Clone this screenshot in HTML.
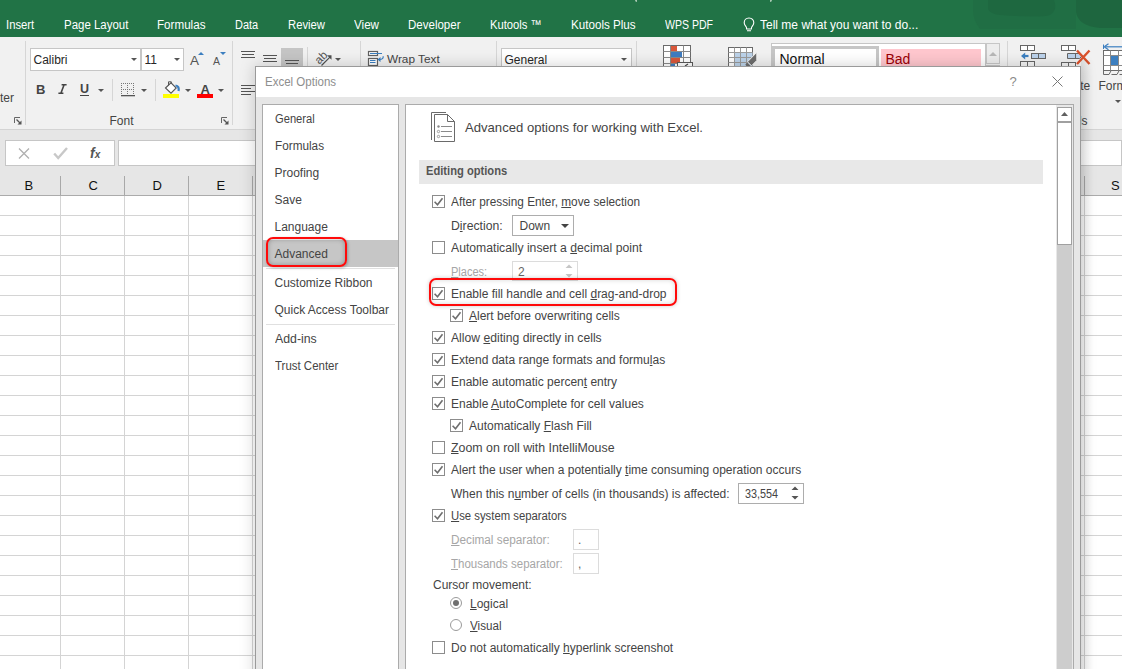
<!DOCTYPE html>
<html><head><meta charset="utf-8">
<style>
html,body{margin:0;padding:0;width:1122px;height:669px;overflow:hidden;background:#fff;position:relative}
.t{position:absolute;white-space:nowrap;font-family:"Liberation Sans",sans-serif}
.t u{text-decoration:underline;text-underline-offset:1px}
.r{position:absolute;display:block}
</style></head><body>
<div class="r" style="left:0px;top:0px;width:1122px;height:37px;background:#217346"></div>
<svg class="r" style="left:960px;top:0px;" width="162" height="37" viewBox="0 0 162 37"><path d="M13 0 L116 0 L116 29 L20 29 Q13 20 13 10 Z" fill="#206e44"/><path d="M28 0 L94 0 Q98 10 90 15 Q80 18 40 15 Q30 14 28 9 Z" fill="#1e6840"/><path d="M116 0 L162 0 L162 28 L140 28 Q118 26 116 12 Z" fill="#1e663f"/></svg>
<div class="r" style="left:635px;top:0px;width:2px;height:2px;background:#a8c9b4;border-radius:0 0 0 2px"></div>
<div class="r" style="left:770px;top:0px;width:2px;height:2px;background:#a8c9b4;border-radius:0 0 2px 0"></div>
<div class="t" style="left:5.5px;top:19.42px;font-size:12.5px;line-height:12.5px;color:#ffffff;font-weight:normal;transform:scaleX(0.902);transform-origin:0 0">Insert</div>
<div class="t" style="left:63.5px;top:19.42px;font-size:12.5px;line-height:12.5px;color:#ffffff;font-weight:normal;transform:scaleX(0.917);transform-origin:0 0">Page Layout</div>
<div class="t" style="left:157px;top:19.42px;font-size:12.5px;line-height:12.5px;color:#ffffff;font-weight:normal;transform:scaleX(0.931);transform-origin:0 0">Formulas</div>
<div class="t" style="left:235px;top:19.42px;font-size:12.5px;line-height:12.5px;color:#ffffff;font-weight:normal;transform:scaleX(0.877);transform-origin:0 0">Data</div>
<div class="t" style="left:288px;top:19.42px;font-size:12.5px;line-height:12.5px;color:#ffffff;font-weight:normal;transform:scaleX(0.902);transform-origin:0 0">Review</div>
<div class="t" style="left:353.5px;top:19.42px;font-size:12.5px;line-height:12.5px;color:#ffffff;font-weight:normal;transform:scaleX(0.930);transform-origin:0 0">View</div>
<div class="t" style="left:408px;top:19.42px;font-size:12.5px;line-height:12.5px;color:#ffffff;font-weight:normal;transform:scaleX(0.921);transform-origin:0 0">Developer</div>
<div class="t" style="left:490px;top:19.42px;font-size:12.5px;line-height:12.5px;color:#ffffff;font-weight:normal;transform:scaleX(0.898);transform-origin:0 0">Kutools ™</div>
<div class="t" style="left:571px;top:19.42px;font-size:12.5px;line-height:12.5px;color:#ffffff;font-weight:normal;transform:scaleX(0.930);transform-origin:0 0">Kutools Plus</div>
<div class="t" style="left:664.5px;top:19.42px;font-size:12.5px;line-height:12.5px;color:#ffffff;font-weight:normal;transform:scaleX(0.844);transform-origin:0 0">WPS PDF</div>
<div class="t" style="left:759.5px;top:19.42px;font-size:12.5px;line-height:12.5px;color:#ffffff;font-weight:normal;transform:scaleX(0.961);transform-origin:0 0">Tell me what you want to do...</div>
<svg class="r" style="left:743px;top:17px;" width="12" height="15" viewBox="0 0 12 15"><path d="M6 1 C3 1 1.2 3.2 1.2 5.7 C1.2 7.8 2.6 8.9 3.4 10.3 L3.6 12 L8.4 12 L8.6 10.3 C9.4 8.9 10.8 7.8 10.8 5.7 C10.8 3.2 9 1 6 1 Z M4 13.8 L8 13.8" fill="none" stroke="#fff" stroke-width="1.1"/></svg>
<div class="r" style="left:0px;top:37px;width:1122px;height:92px;background:#f1f1f1"></div>
<div class="r" style="left:0px;top:129px;width:1122px;height:1px;background:#d4d4d4"></div>
<div class="r" style="left:25px;top:41px;width:1px;height:84px;background:#d6d6d6"></div>
<div class="r" style="left:232px;top:41px;width:1px;height:84px;background:#d6d6d6"></div>
<div class="r" style="left:496px;top:41px;width:1px;height:84px;background:#d6d6d6"></div>
<div class="r" style="left:636px;top:41px;width:1px;height:84px;background:#d6d6d6"></div>
<div class="r" style="left:1007px;top:41px;width:1px;height:84px;background:#d6d6d6"></div>
<div class="r" style="left:307px;top:47px;width:1px;height:20px;background:#d6d6d6"></div>
<div class="r" style="left:112px;top:79px;width:1px;height:22px;background:#d6d6d6"></div>
<div class="r" style="left:155px;top:79px;width:1px;height:22px;background:#d6d6d6"></div>
<div class="t" style="left:0px;top:91.84px;font-size:12px;line-height:12px;color:#444;font-weight:normal;">ter</div>
<svg class="r" style="left:14px;top:117px;" width="8" height="8" viewBox="0 0 8 8"><path d="M0.5 6 L0.5 0.5 L6 0.5" fill="none" stroke="#666" stroke-width="1"/><path d="M2.5 2.5 L6.5 6.5" stroke="#555" stroke-width="1.2"/><path d="M3.5 7.5 H7.5 V3.5 Z" fill="#555"/></svg>
<svg class="r" style="left:221px;top:117px;" width="8" height="8" viewBox="0 0 8 8"><path d="M0.5 6 L0.5 0.5 L6 0.5" fill="none" stroke="#666" stroke-width="1"/><path d="M2.5 2.5 L6.5 6.5" stroke="#555" stroke-width="1.2"/><path d="M3.5 7.5 H7.5 V3.5 Z" fill="#555"/></svg>
<div class="t" style="left:109.5px;top:114.84px;font-size:12px;line-height:12px;color:#444;font-weight:normal;">Font</div>
<div class="r" style="left:30px;top:48px;width:111px;height:23px;background:#fff;border:1px solid #c6c6c6;box-sizing:border-box"></div>
<div class="r" style="left:141px;top:48px;width:43px;height:23px;background:#fff;border:1px solid #c6c6c6;box-sizing:border-box"></div>
<div class="t" style="left:33.5px;top:53.84px;font-size:12px;line-height:12px;color:#262626;font-weight:normal;">Calibri</div>
<div class="t" style="left:144.5px;top:53.84px;font-size:12px;line-height:12px;color:#262626;font-weight:normal;">11</div>
<svg class="r" style="left:131px;top:58px;" width="6" height="3" viewBox="0 0 6 3"><path d="M0 0 L6 0 L3.0 3 Z" fill="#555"/></svg>
<svg class="r" style="left:174px;top:58px;" width="6" height="3" viewBox="0 0 6 3"><path d="M0 0 L6 0 L3.0 3 Z" fill="#555"/></svg>
<div class="t" style="left:190px;top:53.57px;font-size:13.5px;line-height:13.5px;color:#555;font-weight:normal;">A</div>
<svg class="r" style="left:198px;top:52px;" width="6" height="3" viewBox="0 0 6 3"><path d="M0 3 L6 3 L3 0 Z" fill="#3c7fc0"/></svg>
<div class="t" style="left:213px;top:56.11px;font-size:10.5px;line-height:10.5px;color:#555;font-weight:normal;">A</div>
<svg class="r" style="left:219.5px;top:52px;" width="6" height="3" viewBox="0 0 6 3"><path d="M0 0 L6 0 L3 3 Z" fill="#3c7fc0"/></svg>
<div class="t" style="left:36px;top:83.00px;font-size:13px;line-height:13px;color:#444;font-weight:bold;">B</div>
<svg class="r" style="left:58px;top:84px;" width="9" height="10" viewBox="0 0 9 10"><path d="M3.6 0.8 H8.6 M0.4 9.2 H5.4 M6.1 0.8 L2.9 9.2" fill="none" stroke="#444" stroke-width="1.6"/></svg>
<div class="t" style="left:80px;top:83.42px;font-size:12.5px;line-height:12.5px;color:#444;font-weight:bold;">U</div>
<div class="r" style="left:80px;top:95px;width:9px;height:1px;background:#444"></div>
<svg class="r" style="left:98px;top:89px;" width="6" height="3" viewBox="0 0 6 3"><path d="M0 0 L6 0 L3.0 3 Z" fill="#555"/></svg>
<svg class="r" style="left:121px;top:83px;" width="14" height="14" viewBox="0 0 14 14"><rect x="0" y="0" width="1" height="1" fill="#777"/><rect x="0" y="0" width="1" height="1" fill="#777"/><rect x="0" y="6" width="1" height="1" fill="#777"/><rect x="6" y="0" width="1" height="1" fill="#777"/><rect x="0" y="12" width="1" height="1" fill="#777"/><rect x="12" y="0" width="1" height="1" fill="#777"/><rect x="2" y="0" width="1" height="1" fill="#777"/><rect x="0" y="2" width="1" height="1" fill="#777"/><rect x="2" y="6" width="1" height="1" fill="#777"/><rect x="6" y="2" width="1" height="1" fill="#777"/><rect x="2" y="12" width="1" height="1" fill="#777"/><rect x="12" y="2" width="1" height="1" fill="#777"/><rect x="4" y="0" width="1" height="1" fill="#777"/><rect x="0" y="4" width="1" height="1" fill="#777"/><rect x="4" y="6" width="1" height="1" fill="#777"/><rect x="6" y="4" width="1" height="1" fill="#777"/><rect x="4" y="12" width="1" height="1" fill="#777"/><rect x="12" y="4" width="1" height="1" fill="#777"/><rect x="6" y="0" width="1" height="1" fill="#777"/><rect x="0" y="6" width="1" height="1" fill="#777"/><rect x="6" y="6" width="1" height="1" fill="#777"/><rect x="6" y="6" width="1" height="1" fill="#777"/><rect x="6" y="12" width="1" height="1" fill="#777"/><rect x="12" y="6" width="1" height="1" fill="#777"/><rect x="8" y="0" width="1" height="1" fill="#777"/><rect x="0" y="8" width="1" height="1" fill="#777"/><rect x="8" y="6" width="1" height="1" fill="#777"/><rect x="6" y="8" width="1" height="1" fill="#777"/><rect x="8" y="12" width="1" height="1" fill="#777"/><rect x="12" y="8" width="1" height="1" fill="#777"/><rect x="10" y="0" width="1" height="1" fill="#777"/><rect x="0" y="10" width="1" height="1" fill="#777"/><rect x="10" y="6" width="1" height="1" fill="#777"/><rect x="6" y="10" width="1" height="1" fill="#777"/><rect x="10" y="12" width="1" height="1" fill="#777"/><rect x="12" y="10" width="1" height="1" fill="#777"/><rect x="12" y="0" width="1" height="1" fill="#777"/><rect x="0" y="12" width="1" height="1" fill="#777"/><rect x="12" y="6" width="1" height="1" fill="#777"/><rect x="6" y="12" width="1" height="1" fill="#777"/><rect x="12" y="12" width="1" height="1" fill="#777"/><rect x="12" y="12" width="1" height="1" fill="#777"/><rect x="0" y="12" width="14" height="1.3" fill="#555"/></svg>
<svg class="r" style="left:141px;top:89px;" width="6" height="3" viewBox="0 0 6 3"><path d="M0 0 L6 0 L3.0 3 Z" fill="#555"/></svg>
<svg class="r" style="left:163px;top:81px;" width="17" height="13" viewBox="0 0 17 13"><path d="M2.5 7 L8 1.8 L13.2 7 L8 12.2 Z" fill="#fff" stroke="#555" stroke-width="1.1"/><path d="M5.5 4.6 V0.8 H8.3 V3" fill="none" stroke="#555" stroke-width="1"/><path d="M12.5 4.5 Q16.5 5 15.5 10" fill="none" stroke="#3c7fc0" stroke-width="2.2"/></svg>
<div class="r" style="left:163px;top:94px;width:16px;height:4px;background:#ffff00"></div>
<svg class="r" style="left:185px;top:89px;" width="6" height="3" viewBox="0 0 6 3"><path d="M0 0 L6 0 L3.0 3 Z" fill="#555"/></svg>
<div class="t" style="left:200.5px;top:83.00px;font-size:13px;line-height:13px;color:#444;font-weight:bold;">A</div>
<div class="r" style="left:197px;top:94px;width:16px;height:4px;background:#ff0000"></div>
<svg class="r" style="left:218px;top:89px;" width="6" height="3" viewBox="0 0 6 3"><path d="M0 0 L6 0 L3.0 3 Z" fill="#555"/></svg>
<div class="r" style="left:241px;top:51px;width:14px;height:1px;background:#555"></div>
<div class="r" style="left:242px;top:54px;width:12px;height:1px;background:#555"></div>
<div class="r" style="left:241px;top:57px;width:14px;height:1px;background:#555"></div>
<div class="r" style="left:263px;top:55px;width:14px;height:1px;background:#555"></div>
<div class="r" style="left:264px;top:58px;width:12px;height:1px;background:#555"></div>
<div class="r" style="left:263px;top:61px;width:14px;height:1px;background:#555"></div>
<div class="r" style="left:281px;top:48px;width:22px;height:19px;background:#c5c5c5"></div>
<div class="r" style="left:285px;top:60px;width:14px;height:1px;background:#555"></div>
<div class="r" style="left:286px;top:63px;width:12px;height:1px;background:#555"></div>
<div class="r" style="left:285px;top:66px;width:1px;height:1px;background:#555"></div>
<div class="r" style="left:241px;top:85px;width:14px;height:1px;background:#555"></div>
<div class="r" style="left:241px;top:88px;width:10px;height:1px;background:#555"></div>
<div class="r" style="left:241px;top:91px;width:14px;height:1px;background:#555"></div>
<div class="r" style="left:241px;top:94px;width:10px;height:1px;background:#555"></div>
<svg class="r" style="left:312px;top:46px;" width="24" height="22" viewBox="0 0 24 22"><text transform="translate(7.2,18.8) rotate(-45)" font-family="Liberation Sans" font-size="11.5" fill="#505050">ab</text><path d="M9.5 19.5 L18.2 10.8" stroke="#505050" stroke-width="1.2"/><path d="M15 9.2 L19.5 9.2 L19.5 13.7 Z" fill="#505050"/></svg>
<svg class="r" style="left:335px;top:58px;" width="6" height="3" viewBox="0 0 6 3"><path d="M0 0 L6 0 L3.0 3 Z" fill="#555"/></svg>
<div class="r" style="left:360px;top:41px;width:1px;height:30px;background:#d6d6d6"></div>
<svg class="r" style="left:367px;top:50px;" width="18" height="17" viewBox="0 0 18 17"><rect x="1.5" y="1.5" width="9" height="4" fill="#fff" stroke="#606060" stroke-width="1.2"/><rect x="1.5" y="8.5" width="9" height="7" fill="#fff" stroke="#606060" stroke-width="1.2"/><path d="M3 3.5 H15 M3 10.5 H8.5 M3 12.5 H8.5" stroke="#3c7fc0" stroke-width="1"/><path d="M16.2 6.2 Q16.5 9.5 12.5 9.5" fill="none" stroke="#3c7fc0" stroke-width="1.2"/><path d="M10.5 9.5 L13.5 7 L13.5 12 Z" fill="#3c7fc0"/></svg>
<div class="t" style="left:387px;top:54.01px;font-size:11.8px;line-height:11.8px;color:#444;font-weight:normal;">Wrap Text</div>
<div class="r" style="left:501px;top:48px;width:131px;height:30px;background:#fff;border:1px solid #c6c6c6;box-sizing:border-box"></div>
<div class="t" style="left:504.5px;top:53.84px;font-size:12px;line-height:12px;color:#262626;font-weight:normal;">General</div>
<svg class="r" style="left:621px;top:58px;" width="6" height="3" viewBox="0 0 6 3"><path d="M0 0 L6 0 L3.0 3 Z" fill="#555"/></svg>
<svg class="r" style="left:662px;top:44px;" width="32" height="24" viewBox="0 0 32 24"><rect x="1.5" y="1.5" width="27" height="24" fill="#fff" stroke="#6a6a6a"/><path d="M1.5 7.5 H28.5 M1.5 13.5 H28.5 M1.5 19.5 H28.5 M8.5 1.5 V24 M21.5 1.5 V24" stroke="#8a8a8a"/><rect x="9" y="2" width="6" height="5" fill="#d9573a"/><rect x="9" y="8" width="11" height="5" fill="#3f7cc0"/><rect x="9" y="14" width="9" height="5" fill="#d9573a"/><rect x="9" y="20" width="4" height="4" fill="#3f7cc0"/><rect x="15.5" y="18.5" width="15" height="8" fill="#fff" stroke="#5a5a5a"/><path d="M23 22 L26 20" stroke="#444" stroke-width="1.2"/></svg>
<svg class="r" style="left:727px;top:46px;" width="32" height="22" viewBox="0 0 32 22"><rect x="1.5" y="1.5" width="24" height="21" fill="#fff" stroke="#6a6a6a"/><rect x="7.5" y="6.5" width="18" height="16" fill="#bcd3ea"/><path d="M7.5 1.5 V22 M13.5 1.5 V22 M19.5 1.5 V22 M1.5 6.5 H25.5 M1.5 11.5 H25.5 M1.5 16.5 H25.5" stroke="#9a9a9a"/><path d="M29.8 6.3 L29.8 14.5 L24.5 19.8 L20.5 15.8 Z" fill="#6e6e6e" stroke="#f4f4f4" stroke-width="1"/><path d="M20.3 16.6 L23.7 20 L21.4 22 L18.3 18.8 Z" fill="#6e6e6e"/><path d="M16.5 22 L19 20.5" stroke="#3c6fa8" stroke-width="1.4"/></svg>
<div class="r" style="left:771px;top:43px;width:215px;height:30px;background:#fff;border-top:1px solid #c6c6c6;border-left:1px solid #c6c6c6;box-sizing:border-box"></div>
<div class="r" style="left:772px;top:46px;width:107px;height:27px;background:#fff;border:3px solid #c6c6c6;box-sizing:border-box;border-bottom:none"></div>
<div class="t" style="left:779.5px;top:52.15px;font-size:14px;line-height:14px;color:#111;font-weight:normal;">Normal</div>
<div class="r" style="left:881px;top:49px;width:100px;height:24px;background:#ffc7ce"></div>
<div class="t" style="left:885.5px;top:52.15px;font-size:14px;line-height:14px;color:#9c0006;font-weight:normal;">Bad</div>
<div class="r" style="left:985px;top:43px;width:1px;height:30px;background:#c6c6c6"></div>
<div class="r" style="left:986px;top:43px;width:14px;height:21px;background:#ededed;border:1px solid #c6c6c6;box-sizing:border-box"></div>
<svg class="r" style="left:989px;top:52px;" width="8" height="4" viewBox="0 0 8 4"><path d="M0 4 L8 4 L4 0 Z" fill="#b8b8b8"/></svg>
<div class="r" style="left:986px;top:65px;width:14px;height:8px;background:#ededed;border:1px solid #c6c6c6;box-sizing:border-box"></div>
<svg class="r" style="left:1019px;top:44px;" width="28" height="24" viewBox="0 0 28 24"><rect x="1.5" y="1.5" width="14" height="5" fill="#fff" stroke="#666"/><path d="M8.5 1.5 V6.5" stroke="#666"/><rect x="1.5" y="17.5" width="14" height="5" fill="#f4f4f4" stroke="#666"/><path d="M8.5 17.5 V22.5" stroke="#666"/><rect x="12.5" y="9.5" width="14" height="5" fill="#bcd3ec" stroke="#666"/><path d="M19.5 9.5 V14.5" stroke="#666"/><path d="M9.5 12 H5" stroke="#3c7fc0" stroke-width="2.2"/><path d="M2 12 L6.2 8.6 L6.2 15.4 Z" fill="#3c7fc0"/></svg>
<svg class="r" style="left:1060px;top:44px;" width="32" height="24" viewBox="0 0 32 24"><rect x="1.5" y="1.5" width="14" height="5" fill="#fff" stroke="#666"/><path d="M8.5 1.5 V6.5" stroke="#666"/><rect x="1.5" y="18.5" width="14" height="5" fill="#f4f4f4" stroke="#666"/><path d="M8.5 18.5 V23.5" stroke="#666"/><path d="M7.5 9.5 H19.5 L22 12 L19.5 14.5 H7.5 Z" fill="#bcd3ec" stroke="#666"/><path d="M15.5 9.5 V14.5" stroke="#666"/><path d="M17 6.5 L29.5 20 M29.5 6.5 L17 20" stroke="#d9512c" stroke-width="2.4"/></svg>
<svg class="r" style="left:1102px;top:43px;" width="20" height="33" viewBox="0 0 20 33"><path d="M1.5 1.5 V6" stroke="#3c7fc0" stroke-width="1"/><path d="M3 3.8 H20" stroke="#3c7fc0" stroke-width="1.2"/><path d="M2.2 3.8 L6.5 0.8 M2.2 3.8 L6.5 6.8" stroke="#3c7fc0" stroke-width="1.2" fill="none"/><rect x="1.5" y="7.5" width="22" height="20" fill="#fff" stroke="#6a6a6a"/><path d="M1.5 12.5 H22 M1.5 22.5 H22 M8.5 7.5 V27.5 M16.5 7.5 V27.5" stroke="#8a8a8a"/><rect x="9" y="13" width="7" height="9" fill="#3c7fc0"/><path d="M1.5 27.5 V31.5 H7 L9 27.8 M9.5 31.5 H15 L17 27.8 M17.5 31.5 H20" fill="none" stroke="#6a6a6a"/></svg>
<div class="t" style="left:1074px;top:79.84px;font-size:12px;line-height:12px;color:#444;font-weight:normal;letter-spacing:-0.3px">ete</div>
<div class="t" style="left:1098.5px;top:79.84px;font-size:12px;line-height:12px;color:#444;font-weight:normal;">Format</div>
<svg class="r" style="left:1115px;top:100px;" width="6" height="3" viewBox="0 0 6 3"><path d="M0 0 L6 0 L3.0 3 Z" fill="#555"/></svg>
<div class="t" style="left:1079px;top:114.84px;font-size:12px;line-height:12px;color:#444;font-weight:normal;">l</div>
<div class="t" style="left:1081.5px;top:114.84px;font-size:12px;line-height:12px;color:#444;font-weight:normal;">s</div>
<div class="r" style="left:0px;top:130px;width:1122px;height:46px;background:#e6e6e6"></div>
<div class="r" style="left:5px;top:140px;width:110px;height:26px;background:#fff;border:1px solid #c6c6c6;box-sizing:border-box"></div>
<div class="r" style="left:118px;top:140px;width:1004px;height:26px;background:#fff;border:1px solid #c6c6c6;box-sizing:border-box"></div>
<svg class="r" style="left:18px;top:148px;" width="12" height="11" viewBox="0 0 12 11"><path d="M1 0.5 L11 10.5 M11 0.5 L1 10.5" stroke="#b0b0b0" stroke-width="1.3"/></svg>
<svg class="r" style="left:53px;top:147px;" width="15" height="13" viewBox="0 0 15 13"><path d="M1.2 6.5 L5.2 11 L14 1" fill="none" stroke="#c8c8c8" stroke-width="2.4"/></svg>
<div class="t" style="left:90px;top:146.15px;font-size:14px;line-height:14px;color:#555;font-weight:normal;font-family:"Liberation Serif",serif"><b><i>f</i></b><span style="font-size:10px;font-weight:bold;font-style:italic">x</span></div>
<div class="r" style="left:0px;top:176px;width:1122px;height:19px;background:#e6e6e6"></div>
<div class="r" style="left:0px;top:195px;width:1122px;height:1px;background:#ababab"></div>
<div class="r" style="left:60px;top:176px;width:1px;height:19px;background:#a8a8a8"></div>
<div class="r" style="left:124px;top:176px;width:1px;height:19px;background:#a8a8a8"></div>
<div class="r" style="left:188px;top:176px;width:1px;height:19px;background:#a8a8a8"></div>
<div class="r" style="left:252px;top:176px;width:1px;height:19px;background:#a8a8a8"></div>
<div class="r" style="left:1084px;top:176px;width:1px;height:19px;background:#a8a8a8"></div>
<div class="t" style="left:24.5px;top:179.00px;font-size:13px;line-height:13px;color:#111;font-weight:normal;">B</div>
<div class="t" style="left:88.5px;top:179.00px;font-size:13px;line-height:13px;color:#111;font-weight:normal;">C</div>
<div class="t" style="left:152.5px;top:179.00px;font-size:13px;line-height:13px;color:#111;font-weight:normal;">D</div>
<div class="t" style="left:216.5px;top:179.00px;font-size:13px;line-height:13px;color:#111;font-weight:normal;">E</div>
<div class="t" style="left:1111px;top:179.00px;font-size:13px;line-height:13px;color:#111;font-weight:normal;">S</div>
<div class="r" style="left:0px;top:196px;width:1122px;height:473px;background:#fff"></div>
<div class="r" style="left:0px;top:215px;width:1122px;height:1px;background:#d4d4d4"></div>
<div class="r" style="left:0px;top:235px;width:1122px;height:1px;background:#d4d4d4"></div>
<div class="r" style="left:0px;top:255px;width:1122px;height:1px;background:#d4d4d4"></div>
<div class="r" style="left:0px;top:275px;width:1122px;height:1px;background:#d4d4d4"></div>
<div class="r" style="left:0px;top:295px;width:1122px;height:1px;background:#d4d4d4"></div>
<div class="r" style="left:0px;top:315px;width:1122px;height:1px;background:#d4d4d4"></div>
<div class="r" style="left:0px;top:335px;width:1122px;height:1px;background:#d4d4d4"></div>
<div class="r" style="left:0px;top:355px;width:1122px;height:1px;background:#d4d4d4"></div>
<div class="r" style="left:0px;top:375px;width:1122px;height:1px;background:#d4d4d4"></div>
<div class="r" style="left:0px;top:395px;width:1122px;height:1px;background:#d4d4d4"></div>
<div class="r" style="left:0px;top:415px;width:1122px;height:1px;background:#d4d4d4"></div>
<div class="r" style="left:0px;top:435px;width:1122px;height:1px;background:#d4d4d4"></div>
<div class="r" style="left:0px;top:455px;width:1122px;height:1px;background:#d4d4d4"></div>
<div class="r" style="left:0px;top:475px;width:1122px;height:1px;background:#d4d4d4"></div>
<div class="r" style="left:0px;top:495px;width:1122px;height:1px;background:#d4d4d4"></div>
<div class="r" style="left:0px;top:515px;width:1122px;height:1px;background:#d4d4d4"></div>
<div class="r" style="left:0px;top:535px;width:1122px;height:1px;background:#d4d4d4"></div>
<div class="r" style="left:0px;top:555px;width:1122px;height:1px;background:#d4d4d4"></div>
<div class="r" style="left:0px;top:575px;width:1122px;height:1px;background:#d4d4d4"></div>
<div class="r" style="left:0px;top:595px;width:1122px;height:1px;background:#d4d4d4"></div>
<div class="r" style="left:0px;top:615px;width:1122px;height:1px;background:#d4d4d4"></div>
<div class="r" style="left:0px;top:635px;width:1122px;height:1px;background:#d4d4d4"></div>
<div class="r" style="left:0px;top:655px;width:1122px;height:1px;background:#d4d4d4"></div>
<div class="r" style="left:60px;top:196px;width:1px;height:473px;background:#d4d4d4"></div>
<div class="r" style="left:124px;top:196px;width:1px;height:473px;background:#d4d4d4"></div>
<div class="r" style="left:188px;top:196px;width:1px;height:473px;background:#d4d4d4"></div>
<div class="r" style="left:252px;top:196px;width:1px;height:473px;background:#d4d4d4"></div>
<div class="r" style="left:1084px;top:196px;width:1px;height:473px;background:#d4d4d4"></div>
<div class="r" style="left:255px;top:66px;width:826px;height:620px;box-shadow:0 0 14px 1px rgba(0,0,0,0.17)"></div>
<div class="r" style="left:1081px;top:60px;width:12px;height:609px;background:linear-gradient(to right, rgba(0,0,0,0.07), rgba(0,0,0,0))"></div>
<div class="r" style="left:255px;top:66px;width:826px;height:603px;background:#e6e6e6;border:1px solid #9a9a9a;box-sizing:border-box;border-bottom:none"></div>
<div class="r" style="left:256px;top:67px;width:824px;height:30px;background:#fff"></div>
<div class="t" style="left:264.5px;top:75.84px;font-size:12px;line-height:12px;color:#8e8e8e;font-weight:normal;transform:scaleX(0.96);transform-origin:0 0">Excel Options</div>
<div class="t" style="left:1009.5px;top:75.00px;font-size:13px;line-height:13px;color:#8a8a8a;font-weight:normal;">?</div>
<svg class="r" style="left:1052px;top:76px;" width="11" height="11" viewBox="0 0 11 11"><path d="M0.5 0.5 L10.5 10.5 M10.5 0.5 L0.5 10.5" stroke="#777" stroke-width="1"/></svg>
<div class="r" style="left:262px;top:104px;width:137px;height:565px;background:#fff;border:1px solid #ababab;box-sizing:border-box;border-bottom:none"></div>
<div class="r" style="left:263px;top:240px;width:135px;height:27px;background:#c6c6c6"></div>
<div class="r" style="left:266px;top:268px;width:129px;height:1px;background:#e0e0e0"></div>
<div class="r" style="left:266px;top:324px;width:129px;height:1px;background:#e0e0e0"></div>
<div class="t" style="left:274.5px;top:112.84px;font-size:12px;line-height:12px;color:#444;font-weight:normal;transform:scaleX(0.93);transform-origin:0 0">General</div>
<div class="t" style="left:274.5px;top:139.84px;font-size:12px;line-height:12px;color:#444;font-weight:normal;transform:scaleX(0.98);transform-origin:0 0">Formulas</div>
<div class="t" style="left:274.5px;top:166.84px;font-size:12px;line-height:12px;color:#444;font-weight:normal;">Proofing</div>
<div class="t" style="left:274.5px;top:193.84px;font-size:12px;line-height:12px;color:#444;font-weight:normal;">Save</div>
<div class="t" style="left:274.5px;top:220.84px;font-size:12px;line-height:12px;color:#444;font-weight:normal;">Language</div>
<div class="t" style="left:274.5px;top:247.84px;font-size:12px;line-height:12px;color:#444;font-weight:normal;">Advanced</div>
<div class="t" style="left:274.5px;top:276.84px;font-size:12px;line-height:12px;color:#444;font-weight:normal;">Customize Ribbon</div>
<div class="t" style="left:274.5px;top:303.84px;font-size:12px;line-height:12px;color:#444;font-weight:normal;">Quick Access Toolbar</div>
<div class="t" style="left:274.5px;top:332.84px;font-size:12px;line-height:12px;color:#444;font-weight:normal;transform:scaleX(1.025);transform-origin:0 0">Add-ins</div>
<div class="t" style="left:274.5px;top:359.84px;font-size:12px;line-height:12px;color:#444;font-weight:normal;transform:scaleX(0.955);transform-origin:0 0">Trust Center</div>
<div class="r" style="left:265.5px;top:236.5px;width:81px;height:30px;border:2.5px solid #ff0a0a;border-radius:7px;box-sizing:border-box;box-shadow:inset 0 0 5px rgba(0,0,0,0.28), 1px 1px 3px rgba(0,0,0,0.25)"></div>
<div class="r" style="left:405px;top:104px;width:669px;height:565px;background:#fff;border:1px solid #ababab;box-sizing:border-box;border-bottom:none"></div>
<svg class="r" style="left:430px;top:111px;" width="26" height="32" viewBox="0 0 26 32"><path d="M1.5 29 V1.5 H16" fill="none" stroke="#6a6a6a" stroke-width="1"/><path d="M4.5 30.5 V3.5 H17.5 L24.5 10.5 V30.5 Z M17.5 3.5 V10.5 H24.5" fill="none" stroke="#6a6a6a" stroke-width="1"/><circle cx="8.5" cy="15.5" r="1.2" fill="#888"/><circle cx="8.5" cy="20.5" r="1.2" fill="none" stroke="#888" stroke-width="0.8"/><circle cx="8.5" cy="25.5" r="1.2" fill="none" stroke="#888" stroke-width="0.8"/><path d="M11 15.5 H22 M11 20.5 H22 M11 25.5 H22" stroke="#8a8a8a" stroke-width="1"/></svg>
<div class="t" style="left:465px;top:120.91px;font-size:13.1px;line-height:13.1px;color:#444;font-weight:normal;">Advanced options for working with Excel.</div>
<div class="r" style="left:419px;top:160px;width:624px;height:24px;background:#e8e8e8"></div>
<div class="t" style="left:426px;top:164.84px;font-size:12px;line-height:12px;color:#555;font-weight:bold;transform:scaleX(0.93);transform-origin:0 0">Editing options</div>
<svg class="r" style="left:432px;top:195px;" width="13" height="13" viewBox="0 0 13 13"><rect x="0.5" y="0.5" width="12" height="12" fill="#fff" stroke="#8c8c8c" stroke-width="1"/><path d="M2.6 6.8 L5.5 9.8 L10.5 3.2" fill="none" stroke="#6e6e6e" stroke-width="1.6"/></svg>
<div class="t" style="left:451px;top:195.84px;font-size:12px;line-height:12px;color:#444;font-weight:normal;transform:scaleX(0.984);transform-origin:0 0">After pressing Enter, <u>m</u>ove selection</div>
<div class="t" style="left:451px;top:219.84px;font-size:12px;line-height:12px;color:#444;font-weight:normal;transform:scaleX(1.02);transform-origin:0 0">D<u>i</u>rection:</div>
<svg class="r" style="left:432px;top:241px;" width="13" height="13" viewBox="0 0 13 13"><rect x="0.5" y="0.5" width="12" height="12" fill="#fff" stroke="#8c8c8c" stroke-width="1"/></svg>
<div class="t" style="left:451px;top:241.84px;font-size:12px;line-height:12px;color:#444;font-weight:normal;transform:scaleX(1.016);transform-origin:0 0">Automatically insert a <u>d</u>ecimal point</div>
<div class="t" style="left:451px;top:265.84px;font-size:12px;line-height:12px;color:#a6a6a6;font-weight:normal;transform:scaleX(0.919);transform-origin:0 0"><u>P</u>laces:</div>
<svg class="r" style="left:432px;top:287px;" width="13" height="13" viewBox="0 0 13 13"><rect x="0.5" y="0.5" width="12" height="12" fill="#fff" stroke="#8c8c8c" stroke-width="1"/><path d="M2.6 6.8 L5.5 9.8 L10.5 3.2" fill="none" stroke="#6e6e6e" stroke-width="1.6"/></svg>
<div class="t" style="left:451px;top:287.84px;font-size:12px;line-height:12px;color:#444;font-weight:normal;">Enable fill handle and cell <u>d</u>rag-and-drop</div>
<svg class="r" style="left:450px;top:309px;" width="13" height="13" viewBox="0 0 13 13"><rect x="0.5" y="0.5" width="12" height="12" fill="#fff" stroke="#8c8c8c" stroke-width="1"/><path d="M2.6 6.8 L5.5 9.8 L10.5 3.2" fill="none" stroke="#6e6e6e" stroke-width="1.6"/></svg>
<div class="t" style="left:469px;top:309.84px;font-size:12px;line-height:12px;color:#444;font-weight:normal;"><u>A</u>lert before overwriting cells</div>
<svg class="r" style="left:432px;top:331px;" width="13" height="13" viewBox="0 0 13 13"><rect x="0.5" y="0.5" width="12" height="12" fill="#fff" stroke="#8c8c8c" stroke-width="1"/><path d="M2.6 6.8 L5.5 9.8 L10.5 3.2" fill="none" stroke="#6e6e6e" stroke-width="1.6"/></svg>
<div class="t" style="left:451px;top:331.84px;font-size:12px;line-height:12px;color:#444;font-weight:normal;transform:scaleX(1.013);transform-origin:0 0">Allow <u>e</u>diting directly in cells</div>
<svg class="r" style="left:432px;top:353px;" width="13" height="13" viewBox="0 0 13 13"><rect x="0.5" y="0.5" width="12" height="12" fill="#fff" stroke="#8c8c8c" stroke-width="1"/><path d="M2.6 6.8 L5.5 9.8 L10.5 3.2" fill="none" stroke="#6e6e6e" stroke-width="1.6"/></svg>
<div class="t" style="left:451px;top:353.84px;font-size:12px;line-height:12px;color:#444;font-weight:normal;">Extend data range formats and formu<u>l</u>as</div>
<svg class="r" style="left:432px;top:375px;" width="13" height="13" viewBox="0 0 13 13"><rect x="0.5" y="0.5" width="12" height="12" fill="#fff" stroke="#8c8c8c" stroke-width="1"/><path d="M2.6 6.8 L5.5 9.8 L10.5 3.2" fill="none" stroke="#6e6e6e" stroke-width="1.6"/></svg>
<div class="t" style="left:451px;top:375.84px;font-size:12px;line-height:12px;color:#444;font-weight:normal;">Enable automatic percen<u>t</u> entry</div>
<svg class="r" style="left:432px;top:397px;" width="13" height="13" viewBox="0 0 13 13"><rect x="0.5" y="0.5" width="12" height="12" fill="#fff" stroke="#8c8c8c" stroke-width="1"/><path d="M2.6 6.8 L5.5 9.8 L10.5 3.2" fill="none" stroke="#6e6e6e" stroke-width="1.6"/></svg>
<div class="t" style="left:451px;top:397.84px;font-size:12px;line-height:12px;color:#444;font-weight:normal;">Enable <u>A</u>utoComplete for cell values</div>
<svg class="r" style="left:450px;top:419px;" width="13" height="13" viewBox="0 0 13 13"><rect x="0.5" y="0.5" width="12" height="12" fill="#fff" stroke="#8c8c8c" stroke-width="1"/><path d="M2.6 6.8 L5.5 9.8 L10.5 3.2" fill="none" stroke="#6e6e6e" stroke-width="1.6"/></svg>
<div class="t" style="left:469px;top:419.84px;font-size:12px;line-height:12px;color:#444;font-weight:normal;">Automatically <u>F</u>lash Fill</div>
<svg class="r" style="left:432px;top:441px;" width="13" height="13" viewBox="0 0 13 13"><rect x="0.5" y="0.5" width="12" height="12" fill="#fff" stroke="#8c8c8c" stroke-width="1"/></svg>
<div class="t" style="left:451px;top:441.84px;font-size:12px;line-height:12px;color:#444;font-weight:normal;transform:scaleX(1.03);transform-origin:0 0"><u>Z</u>oom on roll with IntelliMouse</div>
<svg class="r" style="left:432px;top:463px;" width="13" height="13" viewBox="0 0 13 13"><rect x="0.5" y="0.5" width="12" height="12" fill="#fff" stroke="#8c8c8c" stroke-width="1"/><path d="M2.6 6.8 L5.5 9.8 L10.5 3.2" fill="none" stroke="#6e6e6e" stroke-width="1.6"/></svg>
<div class="t" style="left:451px;top:463.84px;font-size:12px;line-height:12px;color:#444;font-weight:normal;">Alert the user when a potentially <u>t</u>ime consuming operation occurs</div>
<div class="t" style="left:451px;top:487.84px;font-size:12px;line-height:12px;color:#444;font-weight:normal;">When this n<u>u</u>mber of cells (in thousands) is affected:</div>
<svg class="r" style="left:432px;top:509px;" width="13" height="13" viewBox="0 0 13 13"><rect x="0.5" y="0.5" width="12" height="12" fill="#fff" stroke="#8c8c8c" stroke-width="1"/><path d="M2.6 6.8 L5.5 9.8 L10.5 3.2" fill="none" stroke="#6e6e6e" stroke-width="1.6"/></svg>
<div class="t" style="left:451px;top:509.84px;font-size:12px;line-height:12px;color:#444;font-weight:normal;transform:scaleX(0.943);transform-origin:0 0"><u>U</u>se system separators</div>
<div class="t" style="left:451px;top:533.84px;font-size:12px;line-height:12px;color:#a6a6a6;font-weight:normal;transform:scaleX(0.98);transform-origin:0 0"><u>D</u>ecimal separator:</div>
<div class="t" style="left:451px;top:557.84px;font-size:12px;line-height:12px;color:#a6a6a6;font-weight:normal;transform:scaleX(0.957);transform-origin:0 0"><u>T</u>housands separator:</div>
<div class="t" style="left:433px;top:578.84px;font-size:12px;line-height:12px;color:#444;font-weight:normal;">Cursor movement:</div>
<div class="t" style="left:470px;top:597.84px;font-size:12px;line-height:12px;color:#444;font-weight:normal;"><u>L</u>ogical</div>
<div class="t" style="left:470px;top:619.84px;font-size:12px;line-height:12px;color:#444;font-weight:normal;transform:scaleX(0.969);transform-origin:0 0"><u>V</u>isual</div>
<svg class="r" style="left:432px;top:641px;" width="13" height="13" viewBox="0 0 13 13"><rect x="0.5" y="0.5" width="12" height="12" fill="#fff" stroke="#8c8c8c" stroke-width="1"/></svg>
<div class="t" style="left:451px;top:641.84px;font-size:12px;line-height:12px;color:#444;font-weight:normal;">Do not automatically <u>h</u>yperlink screenshot</div>
<div class="r" style="left:512px;top:215px;width:62px;height:21px;background:#fff;border:1px solid #adadad;box-sizing:border-box"></div>
<div class="t" style="left:519.5px;top:219.84px;font-size:12px;line-height:12px;color:#444;font-weight:normal;">Down</div>
<svg class="r" style="left:561px;top:224px;" width="8" height="4" viewBox="0 0 8 4"><path d="M0 0 L8 0 L4.0 4 Z" fill="#444"/></svg>
<div class="r" style="left:512px;top:261px;width:66px;height:20px;background:#fff;border:1px solid #dcdcdc;box-sizing:border-box"></div>
<div class="t" style="left:518px;top:265.84px;font-size:12px;line-height:12px;color:#666;font-weight:normal;">2</div>
<svg class="r" style="left:565px;top:264px;" width="8" height="15" viewBox="0 0 8 15"><path d="M0.5 4 L7.5 4 L4 0.5 Z M0.5 10 L7.5 10 L4 13.5 Z" fill="#c6c6c6"/></svg>
<div class="r" style="left:429px;top:278.3px;width:248px;height:28.2px;border:2.5px solid #ff0a0a;border-radius:7px;box-sizing:border-box;box-shadow:0 0 4px rgba(0,0,0,0.2), inset 0 0 5px rgba(0,0,0,0.16)"></div>
<div class="r" style="left:738px;top:483px;width:66px;height:21px;background:#fff;border:1px solid #adadad;box-sizing:border-box"></div>
<div class="t" style="left:745px;top:487.84px;font-size:12px;line-height:12px;color:#444;font-weight:normal;transform:scaleX(0.9);transform-origin:0 0">33,554</div>
<svg class="r" style="left:791px;top:486px;" width="8" height="15" viewBox="0 0 8 15"><path d="M0.5 4 L7.5 4 L4 0.5 Z M0.5 10 L7.5 10 L4 13.5 Z" fill="#555"/></svg>
<div class="r" style="left:573px;top:529px;width:26px;height:21px;background:#fff;border:1px solid #dcdcdc;box-sizing:border-box"></div>
<div class="t" style="left:578px;top:533.84px;font-size:12px;line-height:12px;color:#666;font-weight:normal;">.</div>
<div class="r" style="left:573px;top:553px;width:26px;height:21px;background:#fff;border:1px solid #dcdcdc;box-sizing:border-box"></div>
<div class="t" style="left:578px;top:557.84px;font-size:12px;line-height:12px;color:#666;font-weight:normal;">,</div>
<svg class="r" style="left:450px;top:597px;" width="13" height="13" viewBox="0 0 13 13"><circle cx="6" cy="6" r="5.5" fill="#fff" stroke="#9a9a9a"/><circle cx="6" cy="6" r="3" fill="#707070"/></svg>
<svg class="r" style="left:450px;top:619px;" width="13" height="13" viewBox="0 0 13 13"><circle cx="6" cy="6" r="5.5" fill="#fff" stroke="#9a9a9a"/></svg>
<div class="r" style="left:1056px;top:105px;width:17px;height:564px;background:#e8e8e8"></div>
<div class="r" style="left:1057px;top:245px;width:15px;height:424px;background:#cdcdcd"></div>
<div class="r" style="left:1057px;top:107px;width:15px;height:15px;background:#fff;border:1px solid #a0a0a0;box-sizing:border-box"></div>
<svg class="r" style="left:1061px;top:112px;" width="7" height="4" viewBox="0 0 7 4"><path d="M0 4 L7 4 L3.5 0 Z" fill="#606060"/></svg>
<div class="r" style="left:1057px;top:122px;width:15px;height:123px;background:#fff;border:1px solid #a0a0a0;box-sizing:border-box"></div>
<div class="r" style="left:1073px;top:104px;width:1px;height:565px;background:#ababab"></div>
</body></html>
